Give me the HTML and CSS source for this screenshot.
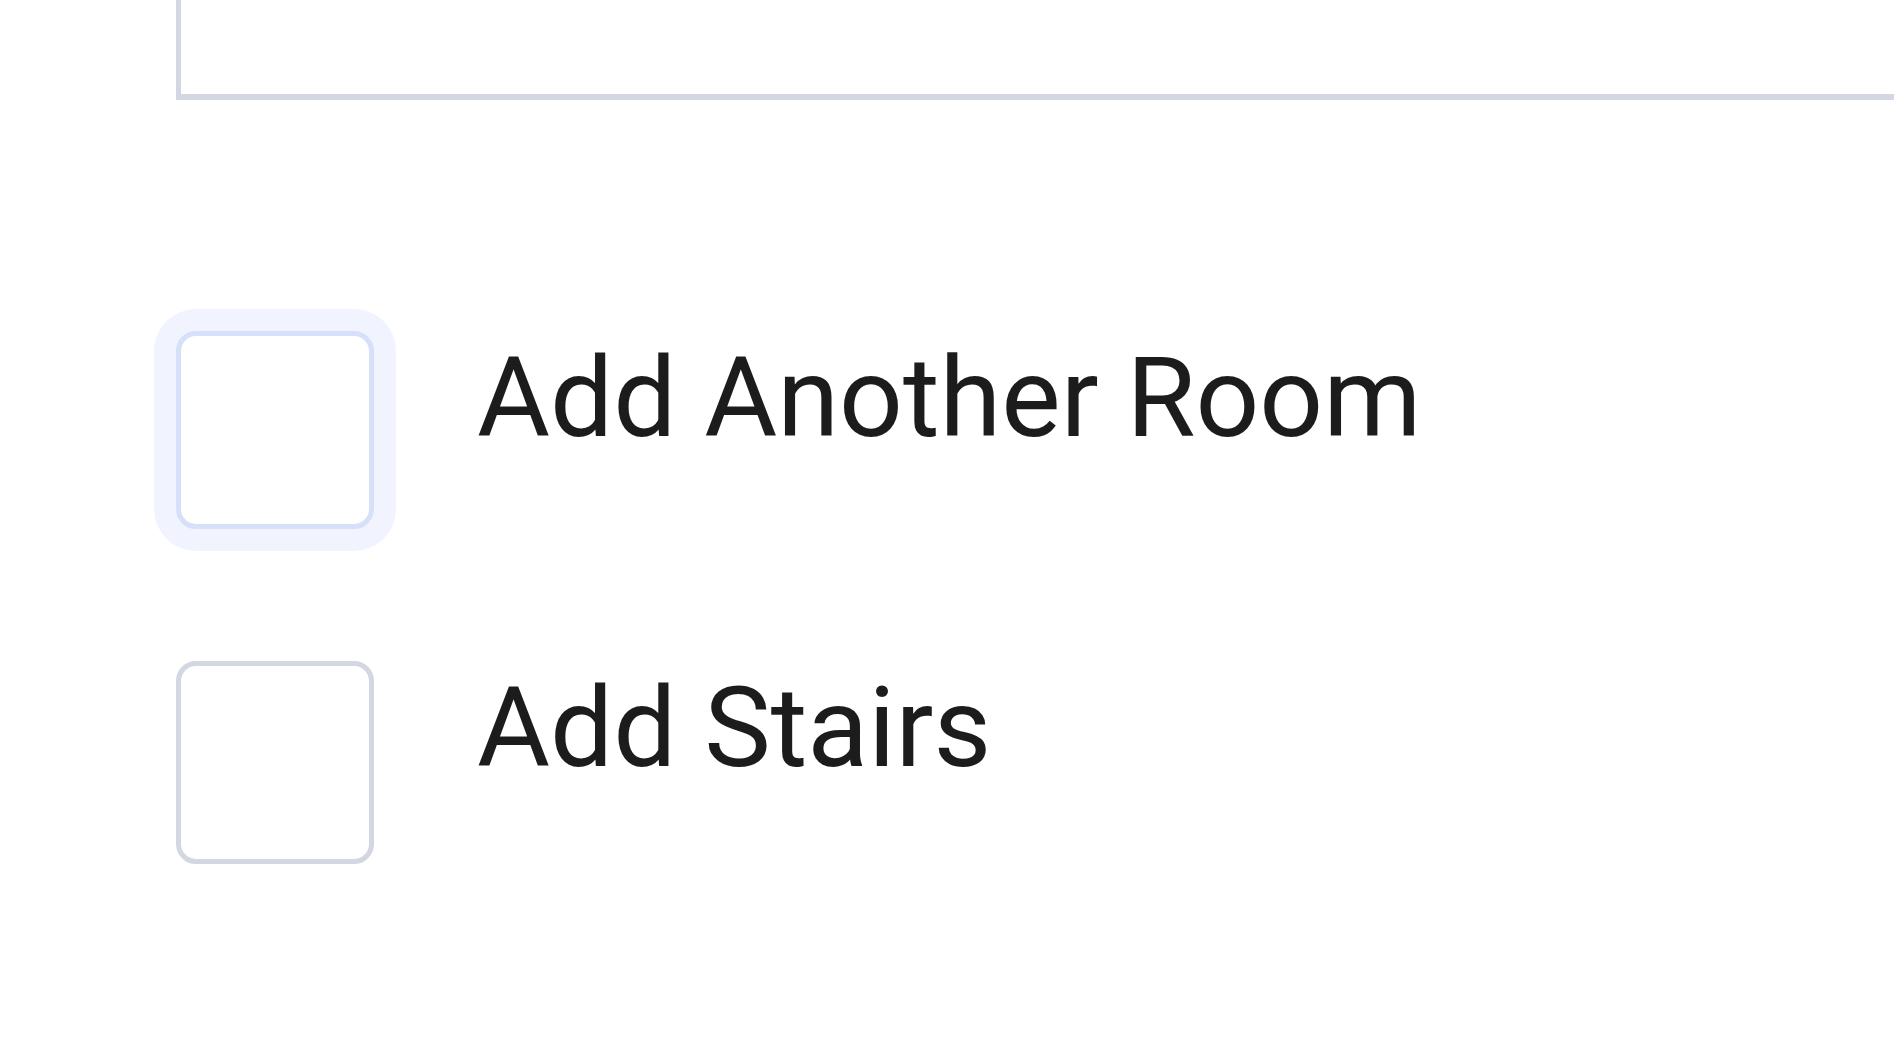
FILE: index.html
```html
<!DOCTYPE html>
<html lang="en">
<head>
<meta charset="utf-8">
<title>Add options</title>
<link rel="stylesheet" href="styles.css">
</head>
<body>
<div class="page">
  <div class="field-box"></div>
  <ul class="options">
    <li class="option">
      <span class="check check-focus"></span>
      <span class="label">Add Another Room</span>
    </li>
    <li class="option">
      <span class="check check-tall"></span>
      <span class="label">Add Stairs</span>
    </li>
  </ul>
</div>
</body>
</html>
```
FILE: styles.css
```css
html, body {
  margin: 0;
  padding: 0;
  background: #ffffff;
  overflow: hidden;
}

.page {
  padding-left: 176px;
  font-family: Roboto, "Liberation Sans", sans-serif;
}

.field-box {
  height: 94px;
  margin-right: -20px;
  border-left: 5px solid #d3d7e2;
  border-bottom: 6px solid #d3d7e2;
}

.options {
  list-style: none;
  margin: 231px 0 0 0;
  padding: 0;
  display: flex;
  flex-direction: column;
  gap: 132px;
}

.option {
  display: flex;
  align-items: flex-start;
}

.check {
  box-sizing: border-box;
  width: 198px;
  height: 198px;
  border: 5px solid #d3d7e2;
  border-radius: 20px;
  background: #ffffff;
  flex: none;
}

.check-focus {
  border-color: #d6e0f9;
  box-shadow: 0 0 0 22px #f1f4fe;
}

.check-tall {
  height: 203px;
}

.label {
  margin-left: 103px;
  padding-top: 1px;
  font-size: 112px;
  line-height: 1.172;
  color: #1c1c1c;
  white-space: nowrap;
}
```
